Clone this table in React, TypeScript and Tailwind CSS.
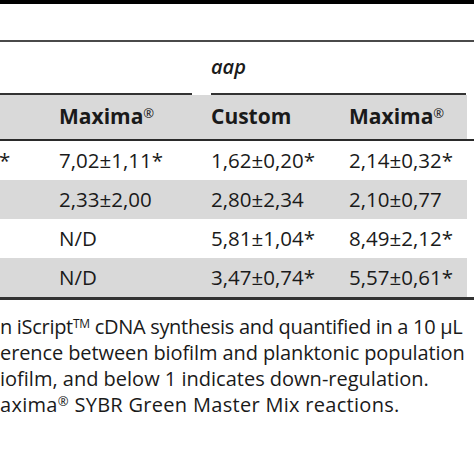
const font = { fontFamily: '"Open Sans", "Noto Sans", sans-serif' }

const rows = [
  { a: "*", b: "7,02±1,11*", c: "1,62±0,20*", d: "2,14±0,32*", shade: false },
  { a: "", b: "2,33±2,00", c: "2,80±2,34", d: "2,10±0,77", shade: true },
  { a: "", b: "N/D", c: "5,81±1,04*", d: "8,49±2,12*", shade: false },
  { a: "", b: "N/D", c: "3,47±0,74*", d: "5,57±0,61*", shade: true },
]

export default function App() {
  return (
    <div className="w-[474px] h-[474px] overflow-hidden bg-white text-[#1a1a1a]" style={font}>
      <div className="h-[4px] bg-black" />
      <div className="h-[36px]" />
      <div className="h-[2px] bg-[#4a4a4a]" />

      {/* spanner */}
      <div className="h-[51px] flex items-center">
        <span className="ml-[211px] italic font-semibold text-[20px] -mt-[2px]">aap</span>
      </div>
      <div className="flex h-[2px]">
        <div className="w-[192px] bg-[#333]" />
        <div className="w-[19px]" />
        <div className="w-[255px] bg-[#333]" />
      </div>

      {/* header row */}
      <div className="grid grid-cols-[59px_152px_138px_118px] h-[44px] items-center bg-[#d9d9d9] w-[467px] font-bold text-[21px]">
        <div />
        <div>
          Maxima<sup className="text-[13px] font-normal">®</sup>
        </div>
        <div>Custom</div>
        <div>
          Maxima<sup className="text-[13px] font-normal">®</sup>
        </div>
      </div>
      <div className="h-[2px] bg-[#2a2a2a]" />

      {rows.map((r, i) => (
        <div
          key={i}
          className={
            "grid grid-cols-[59px_152px_138px_118px] h-[39px] items-center w-[467px] text-[20.5px] " +
            (r.shade ? "bg-[#d9d9d9]" : "bg-white")
          }
        >
          <div className="-ml-[1px]">{r.a}</div>
          <div>{r.b}</div>
          <div>{r.c}</div>
          <div>{r.d}</div>
        </div>
      ))}
      <div className="h-[3px] bg-[#333]" />

      {/* footnote */}
      <div className="pt-[14px] text-[20px] leading-[26px] whitespace-nowrap">
        <p className="tracking-[-0.3px]">
          n iScript<sup className="text-[12px]">TM</sup> cDNA synthesis and quantified in a 10 µL
        </p>
        <p className="tracking-[-0.1px]">erence between biofilm and planktonic population</p>
        <p>iofilm, and below 1 indicates down-regulation.</p>
        <p className="tracking-[0.3px]">
          axima<sup className="text-[13px]">®</sup> SYBR Green Master Mix reactions.
        </p>
      </div>
    </div>
  )
}
